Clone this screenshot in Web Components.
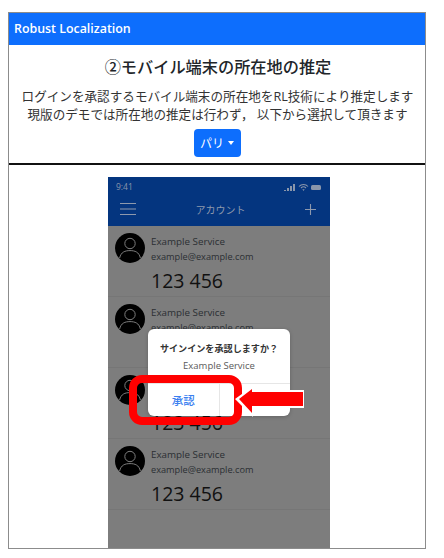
<!DOCTYPE html>
<html lang="ja">
<head>
<meta charset="utf-8">
<style>
  html, body { margin: 0; background: #fff; }
  body { font-family: "Open Sans", "Noto Sans CJK JP", sans-serif; }
</style>
</head>
<body>
<demo-frame>
  <span slot="brand">Robust Localization</span>
  <step-intro></step-intro>
  <phone-mock>
    <account-row></account-row>
    <account-row></account-row>
    <account-row></account-row>
    <account-row></account-row>
  </phone-mock>
</demo-frame>

<script>
const CJK = '"Open Sans", "Noto Sans CJK JP", sans-serif';

class DemoFrame extends HTMLElement {
  constructor() {
    super();
    this.attachShadow({ mode: 'open' });
    this.shadowRoot.innerHTML = `
      <style>
        :host {
          display: block;
          width: 418px;
          height: 537px;
          margin: 12px 0 0 8px;
          box-sizing: border-box;
          border: 1px solid #8c8c8c;
          font-family: ${CJK};
          overflow: hidden;
        }
        .navbar {
          height: 32px;
          background: #0d6efd;
          color: #fff;
          font-size: 12.4px;
          font-weight: 600;
          line-height: 32px;
          padding-left: 5px;
        }
      </style>
      <div class="navbar"><slot name="brand"></slot></div>
      <slot></slot>
    `;
  }
}

class StepIntro extends HTMLElement {
  constructor() {
    super();
    this.attachShadow({ mode: 'open' });
    this.shadowRoot.innerHTML = `
      <style>
        :host {
          display: flex;
          flex-direction: column;
          align-items: center;
          height: 120px;
          box-sizing: border-box;
          border-bottom: 2px solid #111;
          color: #212529;
          font-family: ${CJK};
        }
        h1 {
          margin: 9px 0 0 2px;
          font-size: 16.2px;
          line-height: 26px;
          font-weight: 500;
        }
        p {
          margin: 8px 0 0 1px;
          font-size: 12.6px;
          line-height: 18px;
          text-align: center;
          white-space: nowrap;
          color: #333;
        }
        .dropdown {
          margin-top: 5px;
          width: 47px;
          height: 28px;
          box-sizing: border-box;
          display: flex;
          align-items: center;
          justify-content: center;
          gap: 4px;
          background: #0d6efd;
          color: #fff;
          border: 0;
          border-radius: 4px;
          font: 12px ${CJK};
          padding: 0;
        }
        .caret {
          width: 0;
          height: 0;
          border-top: 4px solid #fff;
          border-left: 3.5px solid transparent;
          border-right: 3.5px solid transparent;
        }
      </style>
      <h1>②モバイル端末の所在地の推定</h1>
      <p>ログインを承認するモバイル端末の所在地をRL技術により推定します<br>現版のデモでは所在地の推定は行わず， 以下から選択して頂きます</p>
      <button class="dropdown">パリ<span class="caret"></span></button>
    `;
  }
}

class PhoneMock extends HTMLElement {
  constructor() {
    super();
    this.attachShadow({ mode: 'open' });
    this.shadowRoot.innerHTML = `
      <style>
        :host {
          display: block;
          position: relative;
          width: 222px;
          height: 372px;
          margin: 12px 0 0 99px;
          background: #7d7d7d;
          font-family: ${CJK};
        }
        .status {
          height: 17px;
          background: #04357f;
          color: #8a96ab;
          font-size: 8.5px;
          line-height: 16px;
          padding: 2px 9px 0 8px;
          box-sizing: border-box;
          display: flex;
          justify-content: space-between;
          align-items: center;
        }
        .appbar {
          height: 32px;
          background: #04357f;
          color: #8e99ad;
          display: flex;
          align-items: center;
          justify-content: space-between;
          padding: 0 14px 2px 12px;
          box-sizing: border-box;
          font-size: 10px;
        }
        svg { display: block; }
        /* ダイアログと注釈はリストの上に重ねる */
        .dialog {
          position: absolute;
          left: 40px;
          top: 152px;
          width: 142px;
          height: 87px;
          background: #fff;
          border-radius: 6px;
          box-shadow: 0 1px 4px rgba(0,0,0,.2);
          text-align: center;
          display: flex;
          flex-direction: column;
        }
        .dialog b {
          font-size: 9.1px;
          font-weight: 600;
          color: #333;
          margin-top: 12px;
          line-height: 16px;
        }
        .dialog span {
          font-size: 9.5px;
          color: #5a5a5a;
          line-height: 16px;
          margin-top: 1px;
        }
        .actions {
          margin-top: auto;
          height: 32px;
          border-top: 1px solid #e6e6e6;
          display: flex;
        }
        .actions div {
          flex: 1;
          color: #3b7ff0;
          font-size: 11.5px;
          font-weight: 500;
          line-height: 34px;
        }
        .actions div + div { border-left: 1px solid #e6e6e6; }
        .ring {
          position: absolute;
          left: 21px;
          top: 198px;
          width: 113px;
          height: 50px;
          box-sizing: border-box;
          border: 8px solid #f00;
          border-radius: 13px;
        }
        .arrow {
          position: absolute;
          left: 126px;
          top: 207px;
        }
      </style>
      <div class="status">
        <span>9:41</span>
        <svg width="38" height="10" viewBox="0 0 38 10" fill="#8a96ab">
          <path d="M1 8h2v1H1zM4 6h2v3H4zM7 4h2v5H7zM10 2h2v7h-2z"/>
          <path d="M16 4.5a6 6 0 0 1 9 0M18 6a3.6 3.6 0 0 1 5 0" fill="none" stroke="#8a96ab" stroke-width="1.1"/>
          <path d="M19.3 7.3h2.4L20.5 9z"/>
          <rect x="28" y="3" width="10" height="5" rx="1.5"/>
        </svg>
      </div>
      <div class="appbar">
        <svg width="16" height="14" viewBox="0 0 16 14" stroke="#8e99ad" stroke-width="1.1">
          <path d="M0 1.5h16M0 7h16M0 12.5h16"/>
        </svg>
        <span>アカウント</span>
        <svg width="11" height="11" viewBox="0 0 11 11" stroke="#8e99ad" stroke-width="1.1">
          <path d="M5.5 0v11M0 5.5h11"/>
        </svg>
      </div>
      <slot></slot>
      <div class="dialog">
        <b>サインインを承認しますか？</b>
        <span>Example Service</span>
        <div class="actions"><div>承認</div><div></div></div>
      </div>
      <div class="ring"></div>
      <svg class="arrow" width="71" height="36" viewBox="0 0 71 36">
        <path d="M1 15 L19 2 V6 H70 V24 H19 V33 Z" fill="#fff"/>
        <path d="M5 15 L18 5 V8 H69 V22 H18 V29 Z" fill="#f00"/>
      </svg>
    `;
  }
}

class AccountRow extends HTMLElement {
  constructor() {
    super();
    this.attachShadow({ mode: 'open' });
    this.shadowRoot.innerHTML = `
      <style>
        :host {
          display: grid;
          grid-template-columns: 30px 1fr;
          column-gap: 6px;
          height: 71px;
          box-sizing: border-box;
          padding: 7px 0 0 7px;
          border-bottom: 1px solid #767676;
          font-family: ${CJK};
        }
        svg { display: block; }
        .name { font-size: 9.8px; line-height: 15px; color: #2b2f33; margin-top: 1px; }
        .mail { font-size: 9.2px; line-height: 15px; color: #2b2f33; }
        .code { font-size: 19.5px; line-height: 26px; color: #111; margin-top: 4px; }
      </style>
      <svg width="30" height="30" viewBox="0 0 30 30">
        <circle cx="15" cy="15" r="15" fill="#000"/>
        <circle cx="15" cy="10.5" r="5.2" fill="none" stroke="#7d7d7d" stroke-width="1"/>
        <path d="M4.6 25 C6 19 10 17.6 15 17.6 C20 17.6 24 19 25.4 25" fill="none" stroke="#7d7d7d" stroke-width="1"/>
      </svg>
      <div>
        <div class="name">Example Service</div>
        <div class="mail">example@example.com</div>
        <div class="code">123 456</div>
      </div>
    `;
  }
}

customElements.define('demo-frame', DemoFrame);
customElements.define('step-intro', StepIntro);
customElements.define('phone-mock', PhoneMock);
customElements.define('account-row', AccountRow);
</script>
</body>
</html>
